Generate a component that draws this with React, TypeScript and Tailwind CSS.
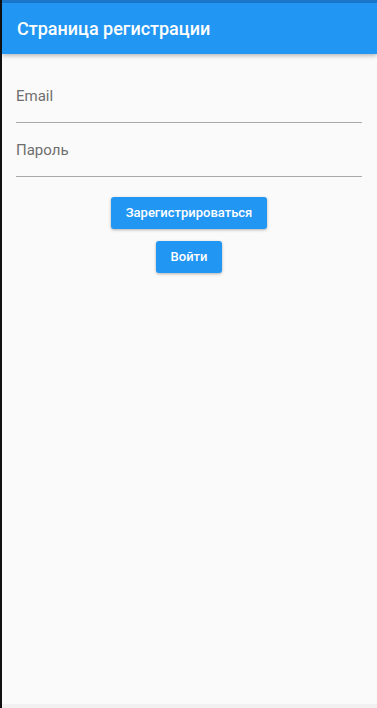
import React from 'react';

const fields = ['Email', 'Пароль'];

export default function App() {
  return (
    <div className="flex h-[708px] w-full overflow-hidden bg-[#111111]" style={{ fontFamily: 'Roboto, "Noto Sans", sans-serif' }}>
      <div className="w-[2px] shrink-0 bg-[#111111]" />
      <div className="flex flex-1 flex-col bg-[#fafafa]">
        {/* status bar */}
        <div className="h-[3px] bg-[#1b78cc]" />

        {/* app bar */}
        <header className="relative z-10 flex h-[51px] items-center bg-[#2196f3] pl-[15px] shadow-[0_2px_4px_rgba(0,0,0,0.25)]">
          <h1 className="text-[18px] font-medium leading-none text-white">Страница регистрации</h1>
        </header>

        <main className="flex flex-1 flex-col pl-[14px] pr-[15px] pt-[15px]">
          {fields.map(f => (
            <div key={f} className="flex h-[54px] items-end border-b border-[#a9a9a9] pb-[16px]">
              <span className="text-[15px] leading-[20px] text-[#6e6e6e]">{f}</span>
            </div>
          ))}

          <div className="mt-[20px] flex flex-col items-center gap-[12px]">
            <button className="h-[32px] rounded-[3px] bg-[#2196f3] px-[15px] text-[13px] font-medium text-white shadow-[0_1px_3px_rgba(0,0,0,0.3)]">
              Зарегистрироваться
            </button>
            <button className="h-[32px] rounded-[3px] bg-[#2196f3] px-[15px] text-[13px] font-medium text-white shadow-[0_1px_3px_rgba(0,0,0,0.3)]">
              Войти
            </button>
          </div>
        </main>

        <div className="h-[4px] bg-[#f1f1f1]" />
      </div>
    </div>
  );
}
